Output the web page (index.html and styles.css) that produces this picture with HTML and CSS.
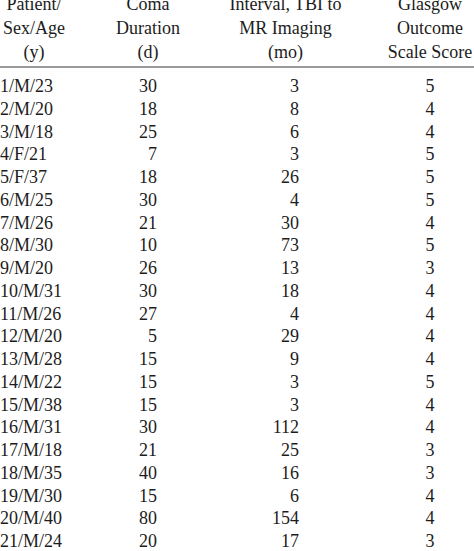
FILE: index.html
```html
<!DOCTYPE html>
<html>
<head>
<meta charset="utf-8">
<link rel="stylesheet" href="styles.css">
</head>
<body>
<div class="table">
  <div class="head">
    <div class="hc c1">Patient/<br>Sex/Age<br>(y)</div>
    <div class="hc c2">Coma<br>Duration<br>(d)</div>
    <div class="hc c3">Interval, TBI to<br>MR Imaging<br>(mo)</div>
    <div class="hc c4">Glasgow<br>Outcome<br>Scale Score</div>
  </div>
  <div class="rule"></div>
  <div class="body">
    <div class="d1">1/M/23</div><div class="d2">30</div><div class="d3">3</div><div class="d4">5</div>
    <div class="d1">2/M/20</div><div class="d2">18</div><div class="d3">8</div><div class="d4">4</div>
    <div class="d1">3/M/18</div><div class="d2">25</div><div class="d3">6</div><div class="d4">4</div>
    <div class="d1">4/F/21</div><div class="d2">7</div><div class="d3">3</div><div class="d4">5</div>
    <div class="d1">5/F/37</div><div class="d2">18</div><div class="d3">26</div><div class="d4">5</div>
    <div class="d1">6/M/25</div><div class="d2">30</div><div class="d3">4</div><div class="d4">5</div>
    <div class="d1">7/M/26</div><div class="d2">21</div><div class="d3">30</div><div class="d4">4</div>
    <div class="d1">8/M/30</div><div class="d2">10</div><div class="d3">73</div><div class="d4">5</div>
    <div class="d1">9/M/20</div><div class="d2">26</div><div class="d3">13</div><div class="d4">3</div>
    <div class="d1">10/M/31</div><div class="d2">30</div><div class="d3">18</div><div class="d4">4</div>
    <div class="d1">11/M/26</div><div class="d2">27</div><div class="d3">4</div><div class="d4">4</div>
    <div class="d1">12/M/20</div><div class="d2">5</div><div class="d3">29</div><div class="d4">4</div>
    <div class="d1">13/M/28</div><div class="d2">15</div><div class="d3">9</div><div class="d4">4</div>
    <div class="d1">14/M/22</div><div class="d2">15</div><div class="d3">3</div><div class="d4">5</div>
    <div class="d1">15/M/38</div><div class="d2">15</div><div class="d3">3</div><div class="d4">4</div>
    <div class="d1">16/M/31</div><div class="d2">30</div><div class="d3">112</div><div class="d4">4</div>
    <div class="d1">17/M/18</div><div class="d2">21</div><div class="d3">25</div><div class="d4">3</div>
    <div class="d1">18/M/35</div><div class="d2">40</div><div class="d3">16</div><div class="d4">3</div>
    <div class="d1">19/M/30</div><div class="d2">15</div><div class="d3">6</div><div class="d4">4</div>
    <div class="d1">20/M/40</div><div class="d2">80</div><div class="d3">154</div><div class="d4">4</div>
    <div class="d1">21/M/24</div><div class="d2">20</div><div class="d3">17</div><div class="d4">3</div>
  </div>
</div>
</body>
</html>
```
FILE: styles.css
```css
html, body {
  margin: 0;
  padding: 0;
  background: #ffffff;
  overflow: hidden;
}
.table {
  width: 485px;
  margin-top: -8px;
  font-family: "Liberation Serif", "Times New Roman", serif;
  font-size: 18px;
  color: #1c1c1c;
}
.head, .body {
  display: grid;
  grid-template-columns: 68px 128px 179px 110px;
}
.head {
  line-height: 24px;
  padding-bottom: 2px;
}
.hc {
  text-align: center;
  white-space: nowrap;
}
.head .c2 {
  padding-left: 32px;
}
.rule {
  height: 2px;
  width: 474px;
  background: #9a9a9a;
  margin-bottom: 7px;
}
.body {
  grid-auto-rows: 22.75px;
  line-height: 22.75px;
}
.d1 {
  text-align: left;
  white-space: nowrap;
}
.d2 {
  text-align: right;
  padding-right: 39px;
}
.d3 {
  text-align: right;
  padding-right: 76px;
}
.d4 {
  text-align: center;
}
```
